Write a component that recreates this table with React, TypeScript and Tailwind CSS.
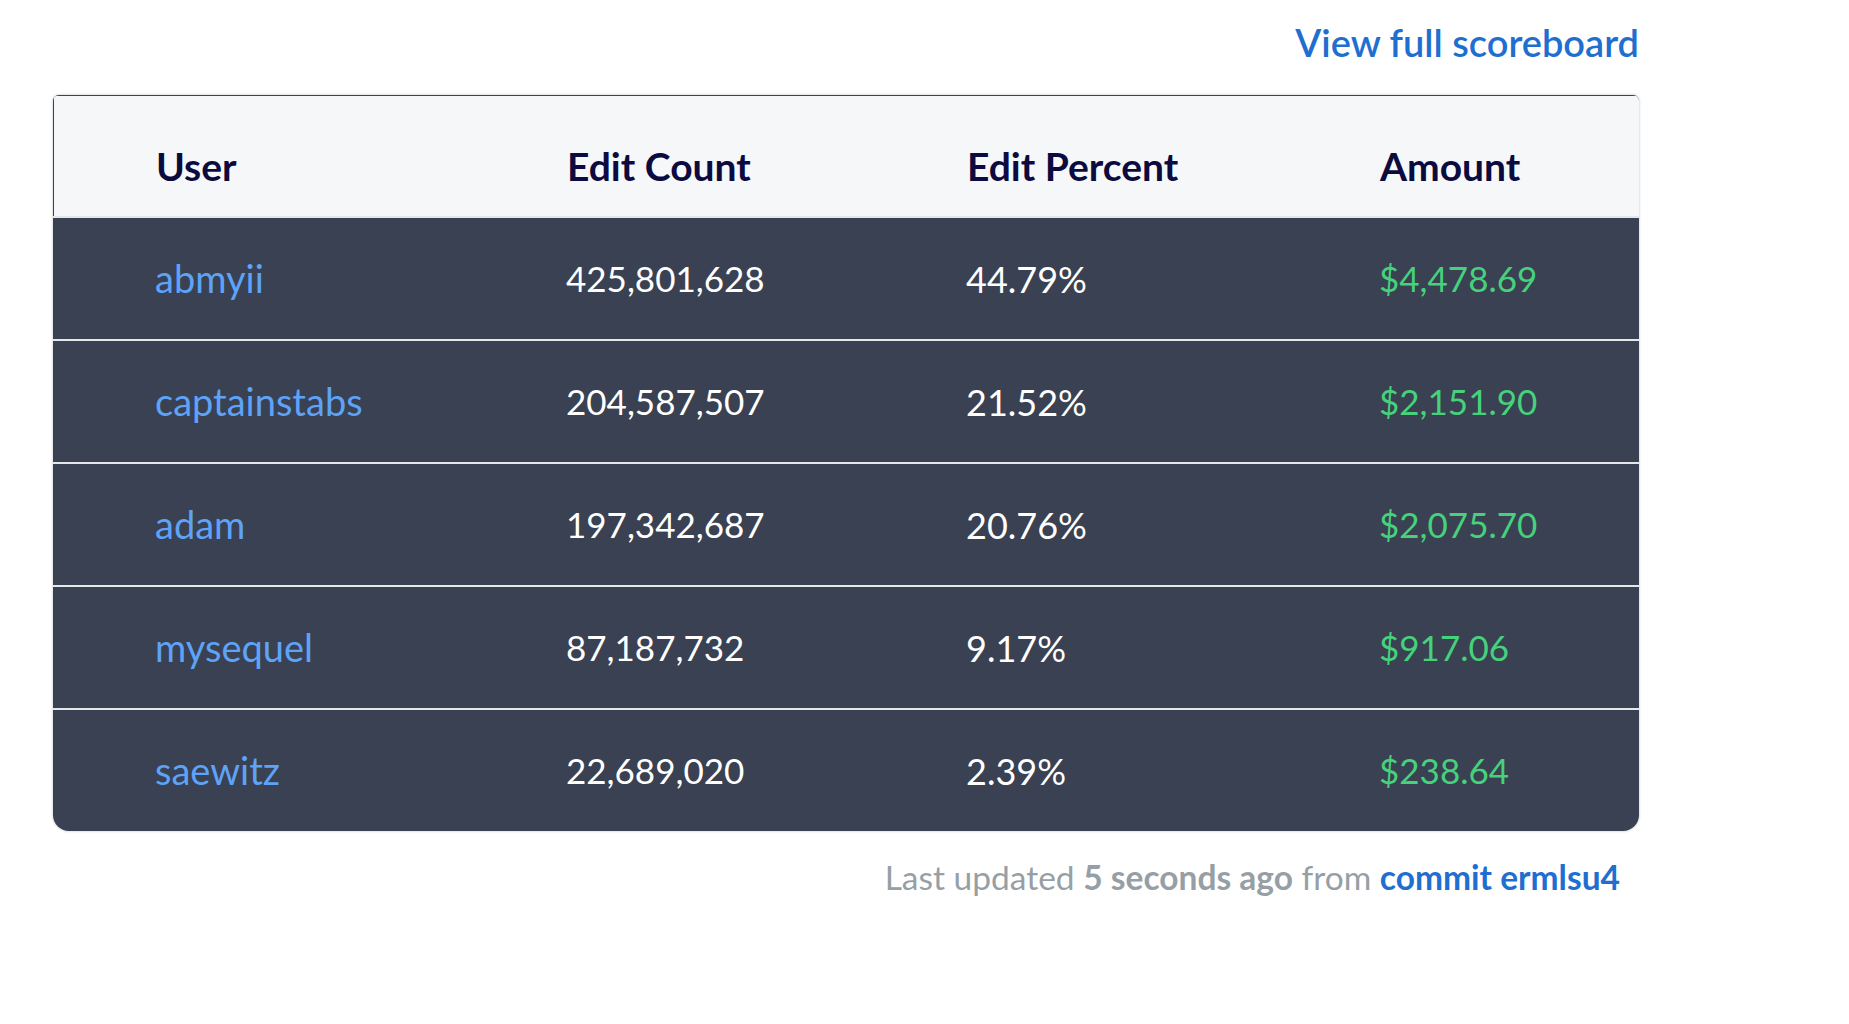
import React from 'react';

interface Row {
    user: string;
    edits: string;
    percent: string;
    amount: string;
}

const rows: Row[] = [
    { user: 'abmyii', edits: '425,801,628', percent: '44.79%', amount: '$4,478.69' },
    { user: 'captainstabs', edits: '204,587,507', percent: '21.52%', amount: '$2,151.90' },
    { user: 'adam', edits: '197,342,687', percent: '20.76%', amount: '$2,075.70' },
    { user: 'mysequel', edits: '87,187,732', percent: '9.17%', amount: '$917.06' },
    { user: 'saewitz', edits: '22,689,020', percent: '2.39%', amount: '$238.64' },
];

export default function App() {
    return (
        <div className="min-h-screen bg-white font-['Lato',sans-serif]">
            <div className="ml-[53px] w-[1586px] pt-[23px]">
                {/* Top link */}
                <div className="flex justify-end">
                    <a href="#" className="text-[38px] leading-none font-semibold text-[#1f6fd0]">
                        View full scoreboard
                    </a>
                </div>

                {/* Scoreboard table */}
                <div className="mt-[34px] overflow-hidden rounded-t-md rounded-b-2xl bg-[#394152] shadow-[0_0_2px_1px_rgba(0,0,0,0.12)]">
                    <div className="grid h-[121px] grid-cols-[513px_400px_413px_1fr] items-center border-t border-l border-[#394152] bg-[#f6f7f9] pt-[20px] text-[39px] font-bold text-[#0b0b3f]">
                        <div className="pl-[102px]">User</div>
                        <div>Edit Count</div>
                        <div>Edit Percent</div>
                        <div>Amount</div>
                    </div>

                    {rows.map((row) => (
                        <div
                            key={row.user}
                            className="grid h-[123px] grid-cols-[513px_400px_413px_1fr] items-center border-t-2 border-gray-200 text-[35px]"
                        >
                            <div className="pl-[102px]">
                                <a href="#" className="text-[38px] text-[#5ea3f7]">{row.user}</a>
                            </div>
                            <div className="text-white">{row.edits}</div>
                            <div className="text-[36px] text-white">{row.percent}</div>
                            <div className="text-[#46d17b]">{row.amount}</div>
                        </div>
                    ))}
                </div>

                {/* Footer */}
                <p className="mt-[30px] pr-[19px] text-right text-[33.5px] leading-none text-[#969fa5]">
                    Last updated <span className="font-bold">5 seconds ago</span> from{' '}
                    <a href="#" className="font-bold text-[#1f6fd0]">commit ermlsu4</a>
                </p>
            </div>
        </div>
    );
}
